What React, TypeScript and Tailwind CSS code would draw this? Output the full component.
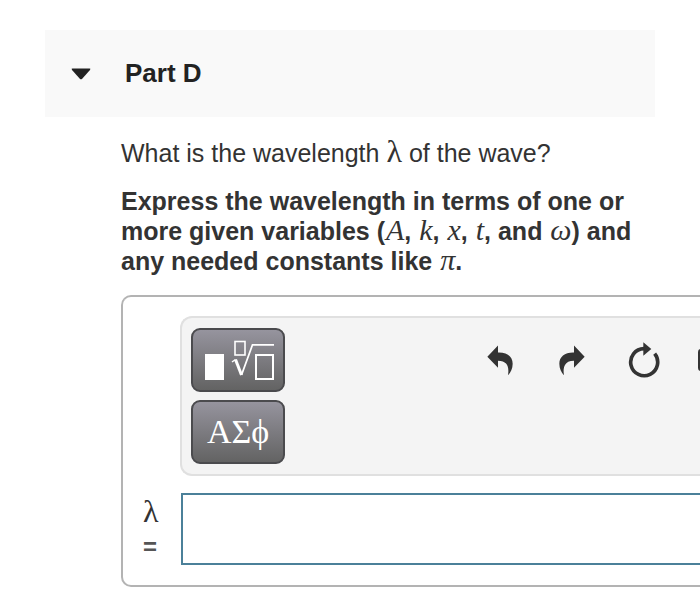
import React, { useState } from "react";

const App = () => {
  const [answer, setAnswer] = useState("");

  return (
    <main className="overflow-hidden bg-white pt-[30px] font-['Liberation_Sans',Arial,sans-serif] text-[#333333]">
      <PartHeader title="Part D" />
      <div className="pl-[121px] pt-[21px]">
        <Question />
        <section className="mt-[19px] rounded-l-[10px] border-2 border-r-0 border-[#b3b3b3] pb-5 pt-[19px]">
          <Toolbar />
          <div className="mt-[17px] flex">
            <label htmlFor="answer" className="flex w-[58px] flex-col items-start pl-5 text-2xl leading-9">
              <span className="font-['Liberation_Serif','Times_New_Roman',serif] text-[32px]">λ</span>
              <span className="font-bold text-[#555555]">=</span>
            </label>
            <input
              id="answer"
              type="text"
              value={answer}
              onChange={(e) => setAnswer(e.target.value)}
              className="h-[72px] min-w-0 flex-1 border-2 border-r-0 border-[#4b8099] bg-white px-3 text-2xl outline-none"
            />
          </div>
        </section>
      </div>
    </main>
  );
};

const PartHeader = ({ title }: { title: string }) => {
  return (
    <header className="mx-[45px] bg-[#f9f9f9]">
      <h2 className="text-[26px] font-bold text-[#222222]">
        <button type="button" className="flex h-[87px] w-full items-center gap-[34px] pl-[26px]">
          <svg width="20" height="12" viewBox="0 0 20 12" fill="#222222">
            <path d="M1.5 .6H18.5Q20 .6 19 2L11.2 10.7Q10 12 8.8 10.7L1 2Q0 .6 1.5 .6Z" />
          </svg>
          {title}
        </button>
      </h2>
    </header>
  );
};

const MathSymbol = ({ children }: { children: React.ReactNode }) => (
  <i className="ml-px inline-block font-['Liberation_Serif','Times_New_Roman',serif] text-[30px] font-normal leading-6">{children}</i>
);

const Question = () => (
  <div className="max-w-[530px] text-[25px] leading-[30px]">
    <p>
      What is the wavelength{" "}
      <span className="inline-block font-['Liberation_Serif','Times_New_Roman',serif] text-[32px] leading-6">λ</span> of the wave?
    </p>
    <p className="mt-[18px] font-bold">
      Express the wavelength in terms of one or more given variables (<MathSymbol>A</MathSymbol>, <MathSymbol>k</MathSymbol>,{" "}
      <MathSymbol>x</MathSymbol>, <MathSymbol>t</MathSymbol>, and <MathSymbol>ω</MathSymbol>) and any needed constants like{" "}
      <MathSymbol>π</MathSymbol>.
    </p>
  </div>
);

const paletteButton =
  "flex h-16 w-[94px] items-center justify-center rounded-[9px] border-2 border-[#4b4b4e] bg-linear-to-b from-[#96949e] to-[#636363] text-white";

const Toolbar = () => (
  <div className="ml-[57px] flex items-start justify-between overflow-hidden rounded-l-xl border-2 border-r-0 border-[#e0e0e0] bg-[#f4f4f4] py-[10px] pl-[9px]">
    <div className="flex flex-col gap-2">
      <button type="button" aria-label="Templates" className={paletteButton}>
        <svg width="72" height="42" viewBox="-1 0 72 42" fill="none" stroke="#ffffff">
          <rect x="2" y="15" width="19" height="26" fill="#ffffff" stroke="none" />
          <rect x="32" y="2.5" width="10" height="13.5" strokeWidth="1.6" />
          <path d="M29 23L32.5 20.5" strokeWidth="1.5" />
          <path d="M32.5 20.5L38.5 36" strokeWidth="3" />
          <path d="M38.5 36L49.5 5.8H71" strokeWidth="1.8" />
          <rect x="53" y="16" width="17" height="24" strokeWidth="2" />
        </svg>
      </button>
      <button type="button" aria-label="Symbols" className={paletteButton}>
        <span className="font-['Liberation_Serif','Times_New_Roman',serif] text-[34px] leading-none">ΑΣϕ</span>
      </button>
    </div>
    <div className="-mr-[34px] flex h-16 shrink-0 items-center gap-9 text-[#333333]">
      <button type="button" aria-label="Undo" className="flex w-9 justify-center">
        <svg width="26" height="31" viewBox="80 134 78 92" fill="currentColor">
          <path d={arrowPath} />
        </svg>
      </button>
      <button type="button" aria-label="Redo" className="flex w-9 justify-center">
        <svg width="26" height="31" viewBox="80 134 78 92" fill="currentColor">
          <path d={arrowPath} transform="translate(238 0) scale(-1 1)" />
        </svg>
      </button>
      <button type="button" aria-label="Reset" className="flex w-9 justify-center">
        <svg width="32" height="36" viewBox="506 127 96 108" fill="none" stroke="currentColor">
          <path d="M586 162A40.5 40.5 0 1 1 554 147" strokeWidth="11" />
          <path d="M552 128L576 148L552 168Z" fill="currentColor" stroke="none" />
        </svg>
      </button>
      <button type="button" aria-label="Keyboard shortcuts" className="flex w-9 justify-center">
        <svg width="36" height="22" viewBox="0 0 36 22" fill="none" stroke="currentColor">
          <rect x="1" y="1" width="34" height="20" rx="2" strokeWidth="2" />
          <path d="M6 7H30M6 11H30" strokeWidth="2" strokeDasharray="2 2" />
          <path d="M10 16H26" strokeWidth="2" />
        </svg>
      </button>
    </div>
  </div>
);

const arrowPath = "M81 169L113 135V156C140 155 157 168 157 190C157 204 151 217 143 224C147 200 141 181 113 181V202Z";

export default App;
